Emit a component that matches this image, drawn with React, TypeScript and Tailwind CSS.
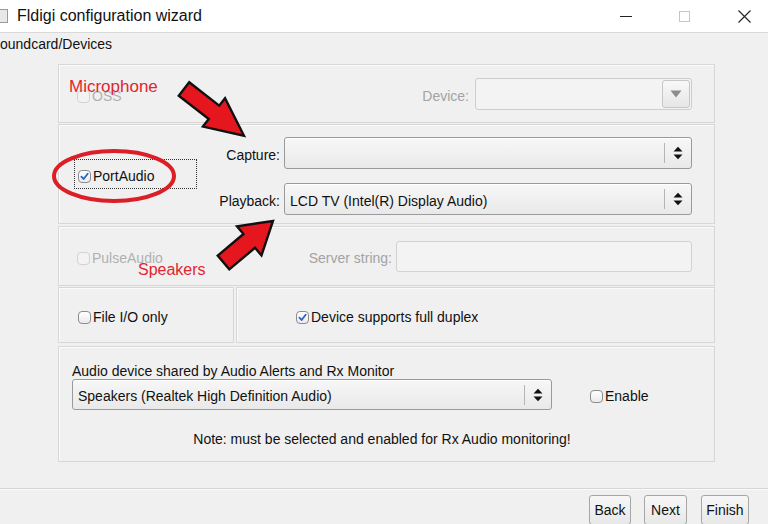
const UI = "font-['Liberation_Sans',Arial,sans-serif]";

function CheckBox({ checked = false, disabled = false }: { checked?: boolean; disabled?: boolean }) {
  return (
    <span
      className={`inline-flex w-[13px] h-[13px] shrink-0 items-center justify-center rounded-[4px] border ${
        disabled ? "border-[#d2d2d2] bg-[#f3f3f3]" : "border-[#8c8c8c] bg-gradient-to-b from-white to-[#eaeaea]"
      }`}
    >
      {checked && (
        <svg width="9" height="9" viewBox="0 0 9 9">
          <path d="M1.4 4.7 L3.6 7 L7.7 1.8" fill="none" stroke="#2a63c8" strokeWidth="1.8" strokeLinecap="round" strokeLinejoin="round" />
        </svg>
      )}
    </span>
  );
}

function Check({ label, checked, disabled }: { label: string; checked?: boolean; disabled?: boolean }) {
  return (
    <span className={`flex items-center gap-[2px] text-[14px] translate-y-[2px] ${disabled ? "text-[#b0b0b0]" : "text-[#111]"}`}>
      <CheckBox checked={checked} disabled={disabled} />
      {label}
    </span>
  );
}

function UpDown() {
  return (
    <svg width="10" height="14" viewBox="0 0 10 14">
      <polygon points="0.5,5.5 5,0.8 9.5,5.5" fill="#111" />
      <polygon points="0.5,8.5 5,13.2 9.5,8.5" fill="#111" />
    </svg>
  );
}

function Combo({ value = "", className = "" }: { value?: string; className?: string }) {
  return (
    <div
      className={`flex items-center rounded-[3px] border border-[#9a9a9a] bg-gradient-to-b from-[#f7f7f7] to-[#e9e9e9] shadow-[inset_0_1px_0_#fff] ${className}`}
    >
      <span className="flex-1 pl-[5px] text-[14px] text-[#111] whitespace-nowrap overflow-hidden translate-y-[1.5px]">{value}</span>
      <span className="w-px h-[20px] bg-[#b5b5b5]" />
      <span className="w-[26px] flex justify-center">
        <UpDown />
      </span>
    </div>
  );
}

function Group({ className = "", children }: { className?: string; children?: React.ReactNode }) {
  return (
    <div className={`border border-[#d7d7d7] shadow-[inset_1px_1px_0_#fbfbfb] ${className}`}>{children}</div>
  );
}

function Arrow({ x, y, angle, shaft, len, head, headLen }: { x: number; y: number; angle: number; shaft: number; len: number; head: number; headLen: number }) {
  const b = len - headLen;
  const pts = `0,${-shaft} ${b},${-shaft} ${b},${-head} ${len},0 ${b},${head} ${b},${shaft} 0,${shaft}`;
  return (
    <polygon
      points={pts}
      transform={`translate(${x} ${y}) rotate(${angle})`}
      fill="#e5161d"
      stroke="#111"
      strokeWidth="2.4"
      strokeLinejoin="miter"
    />
  );
}

export default function App() {
  return (
    <div className={`relative w-[768px] h-[524px] overflow-hidden bg-[#f0f0f0] ${UI}`}>
      {/* title bar */}
      <div className="flex items-center h-[33px] bg-white border-b border-[#d9d9d9]">
        <span className="ml-0 w-[8px] h-[14px] border border-l-0 border-[#9a9a9a] bg-[#e8e8e8]" />
        <span className="ml-[9px] text-[16px] text-[#111]">Fldigi configuration wizard</span>
        <div className="ml-auto flex items-center pr-[17px]">
          <span className="w-[12px] h-px bg-[#222]" />
          <span className="ml-[47px] w-[11px] h-[11px] border border-[#c6c6c6]" />
          <svg className="ml-[48px]" width="13" height="13" viewBox="0 0 13 13">
            <path d="M0.5 0.5 L12.5 12.5 M12.5 0.5 L0.5 12.5" stroke="#222" strokeWidth="1.1" />
          </svg>
        </div>
      </div>

      <div className="h-[31px] pt-[3px] text-[14px] text-[#111] leading-[16px]">oundcard/Devices</div>

      {/* device panel */}
      <div className="ml-[58px] w-[657px] flex flex-col">
        {/* OSS */}
        <Group className="h-[59px] flex items-center pl-[18px] pr-[22px] pt-[1px]">
          <Check label="OSS" disabled />
          <span className="ml-auto text-[14px] text-[#a3a3a3] translate-y-[2px]">Device:</span>
          <div className="ml-[6px] w-[217px] h-[32px] flex items-center rounded-[3px] border border-[#cdcdcd] bg-[#f3f3f3]">
            <span className="ml-auto mr-[1px] w-[28px] h-[28px] flex items-center justify-center rounded-[3px] border border-[#c6c6c6] bg-gradient-to-b from-[#f8f8f8] to-[#e6e6e6]">
              <svg width="12" height="8" viewBox="0 0 12 8">
                <polygon points="0.5,0.5 11.5,0.5 6,7.5" fill="#8c8c8c" />
              </svg>
            </span>
          </div>
        </Group>

        {/* PortAudio */}
        <Group className="mt-[1px] h-[100px] flex items-start pl-[15px] pt-[12px]">
          <div className="mt-[22px] w-[123px] h-[30px] flex items-center pl-[3px] border border-dotted border-[#333]">
            <Check label="PortAudio" checked />
          </div>
          <div className="flex flex-col gap-[14px]">
            <div className="flex items-center">
              <span className="w-[83px] text-right text-[14px] text-[#111] translate-y-[2px]">Capture:</span>
              <Combo className="ml-[4px] w-[408px] h-[32px]" />
            </div>
            <div className="flex items-center">
              <span className="w-[83px] text-right text-[14px] text-[#111] translate-y-[2px]">Playback:</span>
              <Combo className="ml-[4px] w-[408px] h-[32px]" value="LCD TV (Intel(R) Display Audio)" />
            </div>
          </div>
        </Group>

        {/* PulseAudio */}
        <Group className="mt-[2px] h-[60px] flex items-center pl-[18px] pr-[22px] pt-[1px]">
          <Check label="PulseAudio" disabled />
          <span className="ml-auto text-[14px] text-[#a3a3a3] translate-y-[2px]">Server string:</span>
          <span className="ml-[4px] w-[296px] h-[31px] rounded-[3px] border border-[#d2d2d2] bg-[#f3f3f3]" />
        </Group>

        {/* file io / duplex */}
        <div className="mt-[1px] h-[56px] flex gap-[2px]">
          <Group className="w-[176px] flex items-center pl-[19px]">
            <Check label="File I/O only" />
          </Group>
          <Group className="flex-1 flex items-center pl-[59px]">
            <Check label="Device supports full duplex" checked />
          </Group>
        </div>

        {/* audio alerts */}
        <Group className="mt-[3px] h-[116px] pt-[16px] pl-[13px]">
          <div className="text-[14px] leading-[16px] text-[#111]">Audio device shared by Audio Alerts and Rx Monitor</div>
          <div className="flex items-center">
            <Combo className="w-[480px] h-[31px]" value="Speakers (Realtek High Definition Audio)" />
            <span className="ml-[38px]">
              <Check label="Enable" />
            </span>
          </div>
          <div className="mt-[21px] pr-[22px] text-center text-[14px] leading-[16px] text-[#111]">
            Note: must be selected and enabled for Rx Audio monitoring!
          </div>
        </Group>
      </div>

      {/* bottom bar */}
      <div className="mt-[26px] border-t border-[#d6d6d6] shadow-[0_1px_0_#fafafa]" />
      <div className="mt-[6px] flex justify-end pr-[19px]">
        <span className="w-[42px] h-[30px] flex items-center justify-center rounded-[3px] border border-[#a6a6a6] bg-gradient-to-b from-[#f7f7f7] to-[#e8e8e8] text-[14px] text-[#111]">
          Back
        </span>
        <span className="ml-[13px] w-[43px] h-[30px] flex items-center justify-center rounded-[3px] border border-[#a6a6a6] bg-gradient-to-b from-[#f7f7f7] to-[#e8e8e8] text-[14px] text-[#111]">
          Next
        </span>
        <span className="ml-[14px] w-[48px] h-[30px] flex items-center justify-center rounded-[3px] border border-[#a6a6a6] bg-gradient-to-b from-[#f7f7f7] to-[#e8e8e8] text-[14px] text-[#111]">
          Finish
        </span>
      </div>

      {/* annotations */}
      <span className="absolute left-[69px] top-[77px] text-[17px] leading-[20px] text-[#e0262e]">Microphone</span>
      <span className="absolute left-[138px] top-[260px] text-[16px] leading-[20px] text-[#e0262e]">Speakers</span>
      <svg className="absolute left-0 top-0 pointer-events-none" width="768" height="524" viewBox="0 0 768 524">
        <ellipse cx="114" cy="176" rx="60" ry="25" fill="none" stroke="#dc1f27" strokeWidth="4" />
        <Arrow x={184} y={89} angle={37.9} shaft={8.5} len={76} head={18} headLen={38} />
        <Arrow x={223.5} y={262.5} angle={-40} shaft={9} len={64.6} head={19} headLen={31} />
      </svg>
    </div>
  );
}
